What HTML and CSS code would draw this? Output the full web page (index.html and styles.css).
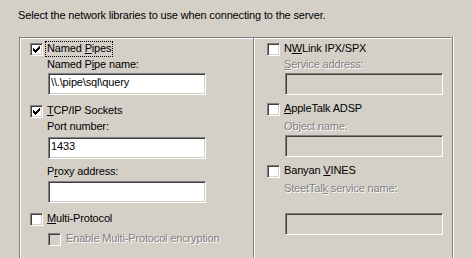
FILE: index.html
```html
<!DOCTYPE html>
<html lang="en">
<head>
  <meta charset="UTF-8">
  <meta name="viewport" content="width=device-width, initial-scale=1.0">
  <title>Network Libraries</title>
  <link rel="stylesheet" href="styles.css">
</head>
<body>
  <div class="intro">Select the network libraries to use when connecting to the server.</div>

  <div class="group">
    <div class="col col-left">
      <div class="check-row top">
        <span class="box"><svg width="7" height="7" viewBox="0 0 7 7"><path d="M0 2h1v3H0zM1 3h1v3H1zM2 4h1v3H2zM3 3h1v3H3zM4 2h1v3H4zM5 1h1v3H5zM6 0h1v3H6z"/></svg></span>
        <span class="label focus">Named <u>P</u>ipes</span>
      </div>
      <div class="field-label">Named P<u>i</u>pe name:</div>
      <div class="edit">\\.\pipe\sql\query</div>

      <div class="check-row">
        <span class="box"><svg width="7" height="7" viewBox="0 0 7 7"><path d="M0 2h1v3H0zM1 3h1v3H1zM2 4h1v3H2zM3 3h1v3H3zM4 2h1v3H4zM5 1h1v3H5zM6 0h1v3H6z"/></svg></span>
        <span class="label"><u>T</u>CP/IP Sockets</span>
      </div>
      <div class="field-label">Port number:</div>
      <div class="edit port">1433</div>
      <div class="field-label proxy">P<u>r</u>oxy address:</div>
      <div class="edit proxy-edit"></div>

      <div class="check-row">
        <span class="box"></span>
        <span class="label"><u>M</u>ulti-Protocol</span>
      </div>
      <div class="check-row sub off">
        <span class="box"></span>
        <span class="label">Enable Multi-Protocol encryption</span>
      </div>
    </div>

    <div class="col col-right">
      <div class="check-row top">
        <span class="box"></span>
        <span class="label">N<u>W</u>Link IPX/SPX</span>
      </div>
      <div class="field-label off first"><u>S</u>ervice address:</div>
      <div class="edit off"></div>

      <div class="check-row">
        <span class="box"></span>
        <span class="label"><u>A</u>ppleTalk ADSP</span>
      </div>
      <div class="field-label off">Ob<u>j</u>ect name:</div>
      <div class="edit off"></div>

      <div class="check-row">
        <span class="box"></span>
        <span class="label">Banyan <u>V</u>INES</span>
      </div>
      <div class="field-label off">SteetTal<u>k</u> service name:</div>
      <div class="edit off street"></div>
    </div>
  </div>
</body>
</html>
```

FILE: styles.css
```css
body {
  margin: 0;
  height: 258px;
  overflow: hidden;
  background-color: #d4d0c8;
  font-family: 'Liberation Sans', Arial, sans-serif;
  font-size: 11px;
  line-height: 13px;
  letter-spacing: -0.15px;
  color: #000;
}

.intro {
  padding: 9px 0 0 18px;
}

/* etched group frame, its bottom edge lies below the window */
.group {
  display: flex;
  box-sizing: border-box;
  width: 434px;
  height: 221px;
  margin: 15px 0 0 19px;
  border: 1px solid #808080;
  border-bottom: 0;
  box-shadow: inset 1px 1px #fff, 1px 0 #fff;
}

.col {
  display: flex;
  flex-direction: column;
  align-items: flex-start;
}

.col-left {
  box-sizing: border-box;
  width: 234px;
  border-right: 1px solid #808080;
  box-shadow: 1px 0 #fff;
}

.col-right {
  flex: 1;
}

/* checkbox rows */
.check-row {
  display: flex;
  align-items: flex-start;
  margin-top: 8px;
  padding-left: 10px;
}

.col-right .check-row {
  margin-top: 6px;
  padding-left: 13px;
}

.col .check-row.top {
  margin-top: 3px;
}

.check-row.sub {
  margin-top: 4px;
  padding-left: 28px;
}

.box {
  display: flex;
  align-items: center;
  justify-content: center;
  box-sizing: border-box;
  width: 13px;
  height: 13px;
  margin-top: 2px;
  border: 1px solid;
  border-color: #808080 #fff #fff #808080;
  box-shadow: inset 1px 1px #404040, inset -1px -1px #d4d0c8;
  background-color: #fff;
}

.box svg {
  display: block;
  shape-rendering: crispEdges;
}

.label {
  margin-left: 2px;
  padding: 0 1px 1px;
  border: 1px solid transparent;
  white-space: nowrap;
}

.label.focus {
  border: 1px dotted #000;
}

.check-row.sub .label {
  margin-left: 3px;
}

/* captions above edit boxes */
.field-label {
  margin-top: 1px;
  padding-left: 27px;
  white-space: nowrap;
}

.col-right .field-label {
  margin-top: 3px;
  padding-left: 30px;
}

.col-right .field-label.first {
  margin-top: 1px;
}

.field-label.proxy {
  margin-top: 6px;
}

/* sunken edit boxes */
.edit {
  box-sizing: border-box;
  width: 158px;
  height: 22px;
  margin: 2px 0 0 28px;
  padding: 2px 0 0 2px;
  border: 1px solid;
  border-color: #808080 #fff #fff #808080;
  box-shadow: inset 1px 1px #404040, inset -1px -1px #d4d0c8;
  background-color: #fff;
  white-space: nowrap;
}

.edit.port {
  margin-top: 4px;
}

.edit.proxy-edit {
  margin-top: 3px;
}

.col-right .edit {
  margin-left: 31px;
}

.edit.street {
  margin-top: 18px;
}

/* disabled controls */
.off {
  color: #808080;
  text-shadow: 1px 1px #fff;
}

.edit.off,
.off .box {
  background-color: #d4d0c8;
}
```
